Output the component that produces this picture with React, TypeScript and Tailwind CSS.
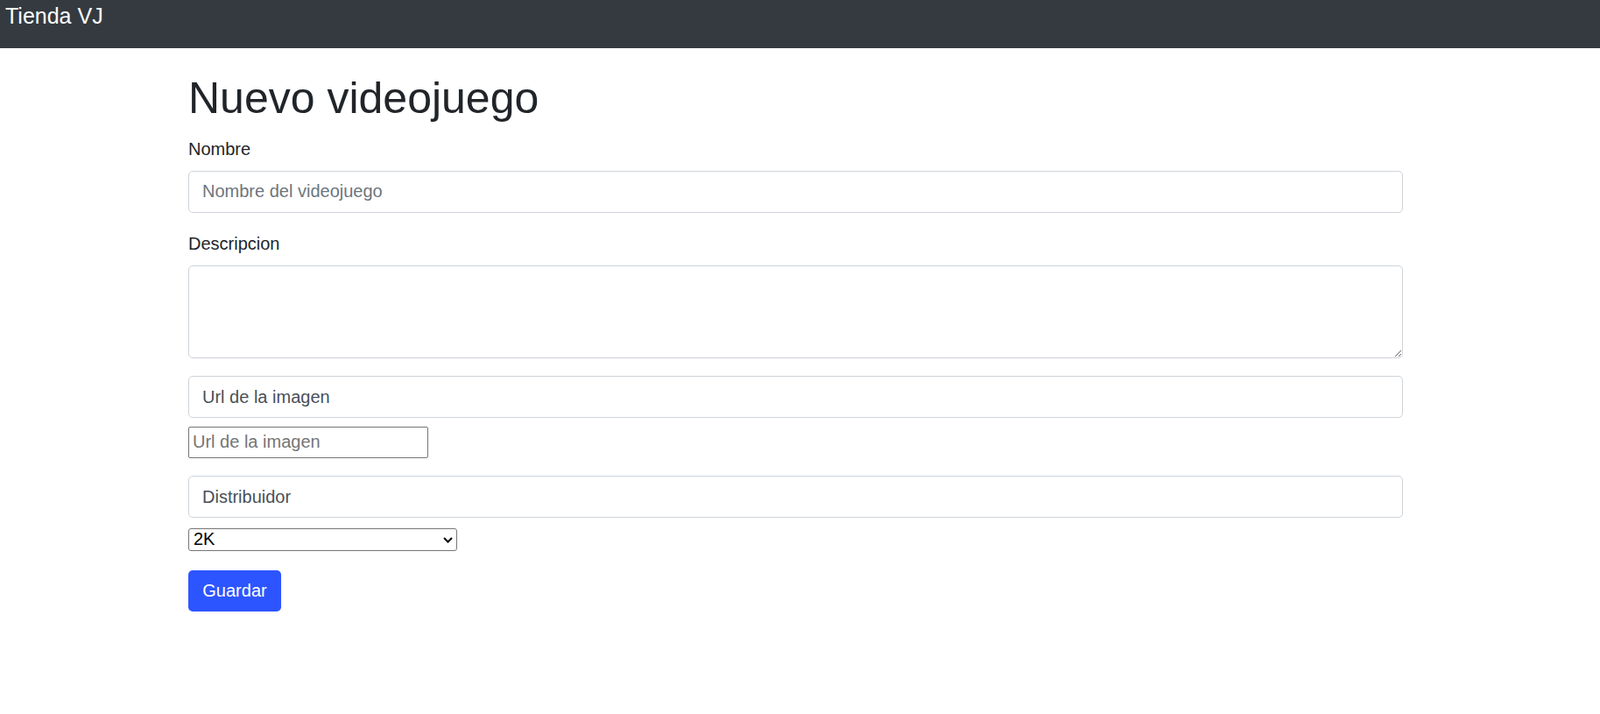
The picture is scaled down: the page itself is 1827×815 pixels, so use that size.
import React from 'react';

// Form page for adding a new videogame
export default function App() {
  return (
    <div className="min-h-[815px] bg-white font-['Liberation_Sans',Arial,sans-serif] text-[20px] leading-[30px] text-[#212529]">
      {/* Top bar */}
      <nav className="h-[55px] bg-[#343a40] pl-[6px]">
        <a className="text-[25px] leading-[37.5px] text-white">Tienda VJ</a>
      </nav>

      <div className="pl-[215px] pt-[27px]">
        <div className="w-[1387px]">
          <h1 className="mb-[13px] text-[50px] font-normal leading-[60px]">Nuevo videojuego</h1>

          <form onSubmit={(e) => e.preventDefault()}>
            <div className="mb-[20px]">
              <label className="mb-[10px] block">Nombre</label>
              <input
                type="text"
                placeholder="Nombre del videojuego"
                className="block h-[47.5px] w-full rounded-[5px] border-[1.25px] border-[#ced4da] bg-white px-[15px] text-[#495057] placeholder:text-[#6c757d]"
              />
            </div>

            <div className="mb-[20.5px]">
              <label className="mb-[10px] block">Descripcion</label>
              <textarea
                rows={3}
                className="block h-[106px] w-full rounded-[5px] border-[1.25px] border-[#ced4da] bg-white px-[15px] py-[7.5px] text-[#495057]"
              />
            </div>

            <div className="mb-[20px]">
              <label className="mb-[10px] flex h-[47.5px] items-center rounded-[5px] border-[1.25px] border-[#ced4da] px-[15px] text-[#495057]">
                Url de la imagen
              </label>
              <input
                type="text"
                placeholder="Url de la imagen"
                className="block h-[36.5px] w-[274px] rounded-[2px] border-[1.5px] border-[#767676] px-[4px] text-black placeholder:text-[#757575]"
              />
            </div>

            <div className="mb-[20px]">
              <label className="mb-[10px] flex h-[47.5px] items-center rounded-[5px] border-[1.25px] border-[#ced4da] px-[15px] text-[#495057]">
                Distribuidor
              </label>
              <div className="h-[30px] pt-[2px]">
                <div className="relative w-[307px]">
                  <select
                    defaultValue="2K"
                    className="block h-[26px] w-full appearance-none rounded-[3px] border-[1.25px] border-[#767676] bg-white pl-[5px] text-[20px] leading-[23px] text-black"
                  >
                    <option>2K</option>
                    <option>EA</option>
                    <option>Ubisoft</option>
                    <option>Nintendo</option>
                  </select>
                  <svg
                    className="pointer-events-none absolute right-[5px] top-[10px] h-[7px] w-[11px]"
                    viewBox="0 0 11 7"
                    fill="none"
                  >
                    <path d="M1 1l4.5 4.5L10 1" stroke="#000" strokeWidth="2" />
                  </svg>
                </div>
              </div>
            </div>

            <button
              type="submit"
              className="h-[47.5px] w-[106px] rounded-[5px] bg-[#2d55ff] text-white"
            >
              Guardar
            </button>
          </form>
        </div>
      </div>
    </div>
  );
}
